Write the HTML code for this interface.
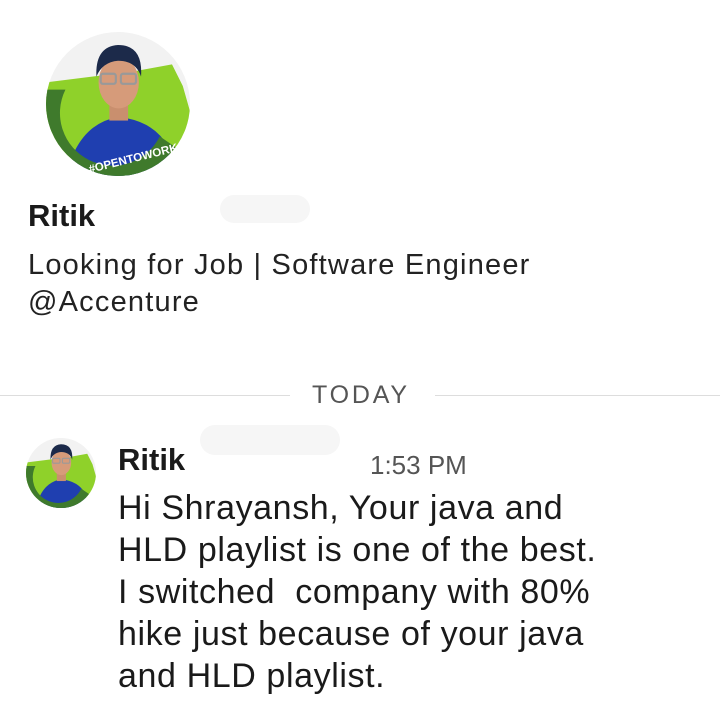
<!DOCTYPE html>
<html><head><meta charset="utf-8"><style>
body{margin:0;width:720px;height:720px;background:#fff;font-family:"Liberation Sans",sans-serif;color:#1a1a1a;position:relative;overflow:hidden}
.a{position:absolute;white-space:nowrap}
</style></head><body>
<svg width="0" height="0" style="position:absolute"><defs>
<clipPath id="cc"><circle cx="100" cy="100" r="100"/></clipPath>
<g id="av">
<g clip-path="url(#cc)">
<rect width="200" height="200" fill="#f2f2f2"/>
<path d="M0 70 L120 55 L175 45 L190 75 L200 110 L200 200 L0 200Z" fill="#8fd12a"/>
<path d="M40 165 Q60 125 100 118 Q150 123 170 160 L180 200 L30 200Z" fill="#1f3fb0"/>
<rect x="88" y="95" width="26" height="28" fill="#c98f6e"/>
<ellipse cx="101" cy="70" rx="28" ry="36" fill="#d69b7a"/>
<path d="M70 62 Q68 20 100 18 Q135 18 132 62 Q125 40 100 40 Q78 42 70 62Z" fill="#1c2a4a"/>
<rect x="76" y="58" width="21" height="14" rx="3" fill="none" stroke="#999" stroke-width="3"/>
<rect x="104" y="58" width="21" height="14" rx="3" fill="none" stroke="#999" stroke-width="3"/>
<path d="M0 80 A100 100 0 0 0 180 160 L158 145 A73 73 0 0 1 27 80Z" fill="#3f7a2c"/>
</g>
</g></defs></svg>
<svg class="a" style="left:46px;top:32px" width="144" height="144" viewBox="0 0 200 200"><use href="#av"/>
<text x="58" y="186" font-size="16" font-weight="bold" fill="#fff" transform="rotate(-14 100 180)" font-family="Liberation Sans">#OPENTOWORK</text></svg>
<svg class="a" style="left:26px;top:438px" width="70" height="70" viewBox="0 0 200 200"><use href="#av"/></svg>
<div class="a" style="left:220px;top:195px;width:90px;height:28px;background:#f6f6f6;border-radius:14px"></div>
<div class="a" style="left:28px;top:198px;font-size:31px;font-weight:bold">Ritik</div>
<div class="a" style="left:28px;top:247px;font-size:29px;line-height:37px;color:#222;letter-spacing:1.2px">Looking for Job | Software Engineer<br>@Accenture</div>
<div class="a" style="left:0;top:395px;width:290px;height:1px;background:#ddd"></div>
<div class="a" style="left:435px;top:395px;width:285px;height:1px;background:#ddd"></div>
<div class="a" style="left:312px;top:381px;font-size:25px;color:#555;letter-spacing:2.8px">TODAY</div>
<div class="a" style="left:200px;top:425px;width:140px;height:30px;background:#f6f6f6;border-radius:15px"></div>
<div class="a" style="left:118px;top:442px;font-size:31px;font-weight:bold">Ritik</div>
<div class="a" style="left:370px;top:450px;font-size:26px;color:#555">1:53 PM</div>
<div class="a" style="left:118px;top:487px;font-size:34px;line-height:42px;color:#1a1a1a;letter-spacing:0.6px">Hi Shrayansh, Your java and<br>HLD playlist is one of the best.<br>I switched&nbsp; company with 80%<br>hike just because of your java<br>and HLD playlist.</div>
</body></html>
